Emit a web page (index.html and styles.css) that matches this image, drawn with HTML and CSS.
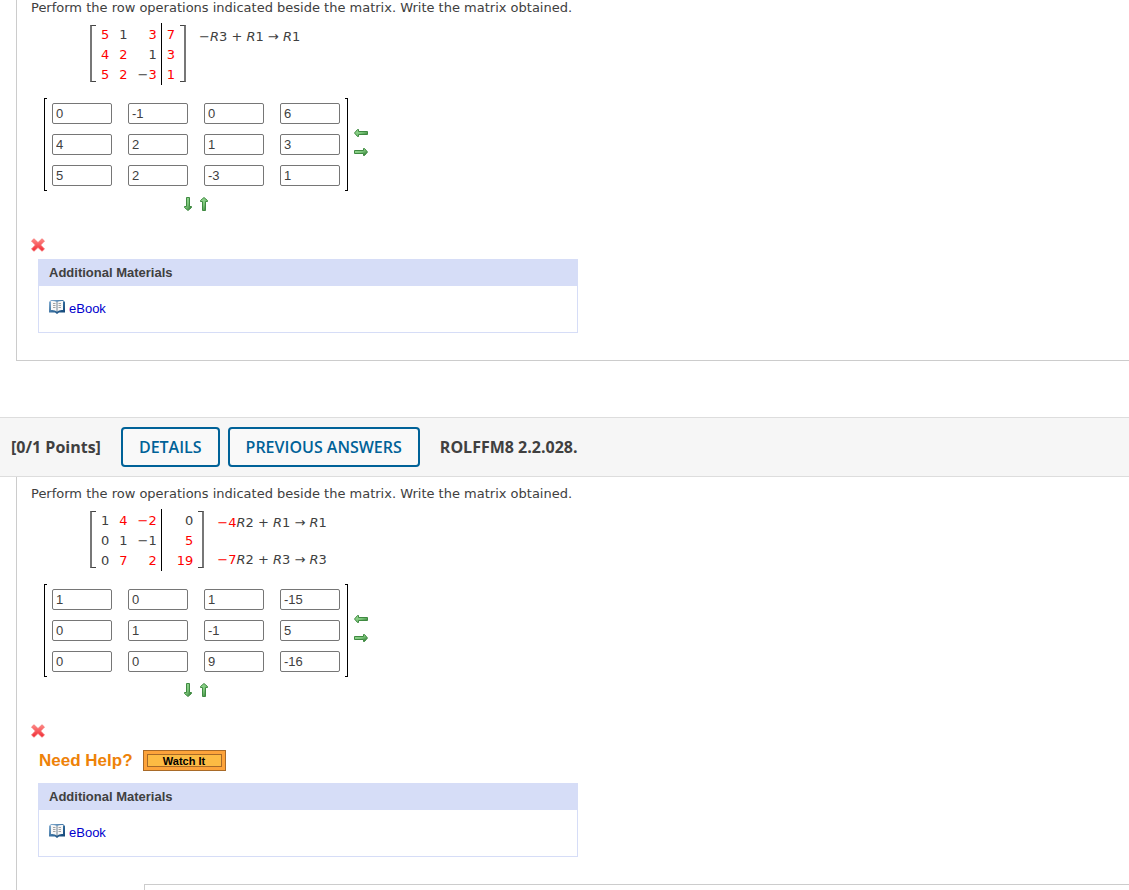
FILE: index.html
```html
<!DOCTYPE html>
<html lang="en">
<head>
  <meta charset="UTF-8">
  <meta name="viewport" content="width=device-width, initial-scale=1.0">
  <title>Matrix Row Operations</title>
  <link rel="stylesheet" href="styles.css">
</head>
<body>

  <!-- Shared icons -->
  <svg class="sprite" aria-hidden="true">
    <defs>
      <linearGradient id="green" x1="0" y1="0" x2="1" y2="1">
        <stop offset="0" stop-color="#9fdc9b"/>
        <stop offset="0.5" stop-color="#7cc67a"/>
        <stop offset="1" stop-color="#1f6b25"/>
      </linearGradient>
      <linearGradient id="red" x1="0" y1="0" x2="0" y2="1">
        <stop offset="0" stop-color="#ff8a86"/>
        <stop offset="1" stop-color="#f02a34"/>
      </linearGradient>
      <linearGradient id="cover" x1="0" y1="0" x2="1" y2="1">
        <stop offset="0" stop-color="#8db4d6"/>
        <stop offset="0.6" stop-color="#2b6496"/>
        <stop offset="1" stop-color="#0d3f70"/>
      </linearGradient>
    </defs>
    <symbol id="arrow-right" viewBox="0 0 14 8">
      <path d="M.5 2.500H9.500V.5H10.500L13.500 4 10.500 7.500H9.500V5.500H.5Z" fill="url(#green)" stroke="#3f8a41"/>
    </symbol>
    <symbol id="arrow-left" viewBox="0 0 14 8">
      <path d="M13.500 2.500H4.500V.5H3.500L.5 4 3.500 7.500H4.500V5.500H13.500Z" fill="url(#green)" stroke="#3f8a41"/>
    </symbol>
    <symbol id="arrow-down" viewBox="0 0 8 14">
      <path d="M2.500 .5V9.500H.5V10.500L4 13.500 7.500 10.500V9.500H5.500V.5Z" fill="url(#green)" stroke="#3f8a41"/>
    </symbol>
    <symbol id="arrow-up" viewBox="0 0 8 14">
      <path d="M2.500 13.500V4.500H.5V3.500L4 .5 7.500 3.500V4.500H5.500V13.500Z" fill="url(#green)" stroke="#3f8a41"/>
    </symbol>
    <symbol id="wrong" viewBox="0 0 14 14">
      <path d="M3 .7 7 4.500 11 .7 13.500 3 9.700 7 13.500 11 11 13.300 7 9.500 3 13.300 .5 11 4.300 7 .5 3Z" fill="url(#red)" stroke="#f36b6b" stroke-width=".7"/>
    </symbol>
    <symbol id="book" viewBox="0 0 16 14">
      <path d="M0 1.500H1.500V0H14.500V1.500H16V12.500H10L8 14 6 12.500H0Z" fill="url(#cover)"/>
      <path d="M2 1Q5.500 .5 8 2 10.500 .5 14 1V10Q10.500 9.500 8 11.500 5.500 9.500 2 10Z" fill="#f7f7f7"/>
      <path d="M8 2V12" stroke="#6f8294"/>
      <path d="M4 3.500H6.500M4 5.500H6.500M4 7.500H6.500M9.500 3.500H12M9.500 5.500H12M9.500 7.500H12" stroke="#a3a3a3"/>
    </symbol>
  </svg>

  <section class="question first">
    <p class="prompt">Perform the row operations indicated beside the matrix. Write the matrix obtained.</p>

    <div class="problem">
      <span class="bracket open"></span>
      <table class="matrix">
        <tr><td class="rand">5</td><td>1</td><td class="rand">3</td><td class="rand">7</td></tr>
        <tr><td class="rand">4</td><td class="rand">2</td><td>1</td><td class="rand">3</td></tr>
        <tr><td class="rand">5</td><td class="rand">2</td><td>−<span class="rand">3</span></td><td class="rand">1</td></tr>
      </table>
      <span class="bracket close"></span>
      <div class="operations">
        <p>−<i>R</i>3 + <i>R</i>1 → <i>R</i>1</p>
      </div>
    </div>

    <form class="answer">
      <div class="answer-matrix">
        <span class="bracket open"></span>
        <div class="entries">
          <input type="text" aria-label="Row 1 column 1" value="0">
          <input type="text" aria-label="Row 1 column 2" value="-1">
          <input type="text" aria-label="Row 1 column 3" value="0">
          <input type="text" aria-label="Row 1 column 4" value="6">
          <input type="text" aria-label="Row 2 column 1" value="4">
          <input type="text" aria-label="Row 2 column 2" value="2">
          <input type="text" aria-label="Row 2 column 3" value="1">
          <input type="text" aria-label="Row 2 column 4" value="3">
          <input type="text" aria-label="Row 3 column 1" value="5">
          <input type="text" aria-label="Row 3 column 2" value="2">
          <input type="text" aria-label="Row 3 column 3" value="-3">
          <input type="text" aria-label="Row 3 column 4" value="1">
        </div>
        <span class="bracket close"></span>
      </div>
      <div class="resize columns">
        <button type="button" aria-label="Remove column"><svg width="14" height="8"><use href="#arrow-left"/></svg></button>
        <button type="button" aria-label="Add column"><svg width="14" height="8"><use href="#arrow-right"/></svg></button>
      </div>
      <div class="resize rows">
        <button type="button" aria-label="Add row"><svg width="8" height="14"><use href="#arrow-down"/></svg></button>
        <button type="button" aria-label="Remove row"><svg width="8" height="14"><use href="#arrow-up"/></svg></button>
      </div>
    </form>

    <svg class="mark" width="14" height="14" role="img" aria-label="Incorrect"><use href="#wrong"/></svg>

    <div class="materials">
      <h3>Additional Materials</h3>
      <a href="#"><svg width="16" height="14" aria-hidden="true"><use href="#book"/></svg>eBook</a>
    </div>
  </section>

  <header class="question-header">
    <strong class="points">[0/1 Points]</strong>
    <button type="button">DETAILS</button>
    <button type="button">PREVIOUS ANSWERS</button>
    <strong class="source">ROLFFM8 2.2.028.</strong>
  </header>

  <section class="question last">
    <p class="prompt">Perform the row operations indicated beside the matrix. Write the matrix obtained.</p>

    <div class="problem">
      <span class="bracket open"></span>
      <table class="matrix wide">
        <tr><td>1</td><td class="rand">4</td><td class="rand">−2</td><td>0</td></tr>
        <tr><td>0</td><td>1</td><td>−1</td><td class="rand">5</td></tr>
        <tr><td>0</td><td class="rand">7</td><td class="rand">2</td><td class="rand">19</td></tr>
      </table>
      <span class="bracket close"></span>
      <div class="operations">
        <p><span class="rand">−4</span><i>R</i>2 + <i>R</i>1 → <i>R</i>1</p>
        <p><span class="rand">−7</span><i>R</i>2 + <i>R</i>3 → <i>R</i>3</p>
      </div>
    </div>

    <form class="answer">
      <div class="answer-matrix">
        <span class="bracket open"></span>
        <div class="entries">
          <input type="text" aria-label="Row 1 column 1" value="1">
          <input type="text" aria-label="Row 1 column 2" value="0">
          <input type="text" aria-label="Row 1 column 3" value="1">
          <input type="text" aria-label="Row 1 column 4" value="-15">
          <input type="text" aria-label="Row 2 column 1" value="0">
          <input type="text" aria-label="Row 2 column 2" value="1">
          <input type="text" aria-label="Row 2 column 3" value="-1">
          <input type="text" aria-label="Row 2 column 4" value="5">
          <input type="text" aria-label="Row 3 column 1" value="0">
          <input type="text" aria-label="Row 3 column 2" value="0">
          <input type="text" aria-label="Row 3 column 3" value="9">
          <input type="text" aria-label="Row 3 column 4" value="-16">
        </div>
        <span class="bracket close"></span>
      </div>
      <div class="resize columns">
        <button type="button" aria-label="Remove column"><svg width="14" height="8"><use href="#arrow-left"/></svg></button>
        <button type="button" aria-label="Add column"><svg width="14" height="8"><use href="#arrow-right"/></svg></button>
      </div>
      <div class="resize rows">
        <button type="button" aria-label="Add row"><svg width="8" height="14"><use href="#arrow-down"/></svg></button>
        <button type="button" aria-label="Remove row"><svg width="8" height="14"><use href="#arrow-up"/></svg></button>
      </div>
    </form>

    <svg class="mark" width="14" height="14" role="img" aria-label="Incorrect"><use href="#wrong"/></svg>

    <div class="help">
      <span>Need Help?</span>
      <button type="button">Watch It</button>
    </div>

    <div class="materials">
      <h3>Additional Materials</h3>
      <a href="#"><svg width="16" height="14" aria-hidden="true"><use href="#book"/></svg>eBook</a>
    </div>

    <div class="submission"></div>
  </section>

</body>
</html>
```

FILE: styles.css
```css
* {
  margin: 0;
  padding: 0;
  box-sizing: border-box;
}

body {
  display: flex;
  flex-direction: column;
  min-height: 100vh;
  background-color: #fff;
  color: #404040;
  font-family: "DejaVu Sans", Verdana, sans-serif;
  font-size: 13px;
}

svg {
  display: block;
}

.sprite {
  position: absolute;
  width: 0;
  height: 0;
}

/* Question body */
.question {
  margin-left: 16px;
  padding: 9px 0 0 14px;
  border-left: 1px solid #ccc;
}

.question.first {
  margin-bottom: 56px;
  padding-top: 0;
  padding-bottom: 27px;
  border-bottom: 1px solid #ccc;
}

.question.last {
  display: flex;
  flex: 1;
  flex-direction: column;
}

.prompt {
  line-height: 16px;
}

.rand {
  color: #f00;
}

/* Given matrix */
.problem {
  display: flex;
  align-items: flex-start;
  margin: 7px 0 13px 59px;
}

.bracket {
  border: 1px solid #000;
}

.bracket.open {
  border-right: none;
}

.bracket.close {
  border-left: none;
}

.problem .bracket {
  width: 6px;
  height: 57px;
  margin-top: 2px;
  border-color: #444;
}

.problem .bracket.open {
  border-left-width: 2px;
  border-left-color: #777;
}

.problem .bracket.close {
  border-right-width: 2px;
  border-right-color: #777;
}

.matrix {
  border-collapse: separate;
  border-spacing: 0;
}

.matrix td {
  padding-left: 10px;
  line-height: 20px;
  text-align: right;
}

.matrix tr:first-child td {
  padding-top: 2px;
}

.matrix td:first-child {
  padding-left: 5px;
}

.matrix td:nth-child(3) {
  padding-right: 4px;
  border-right: 1px solid #000;
}

.matrix td:last-child {
  padding: 0 5px;
}

.matrix tr:first-child td:last-child {
  padding-top: 2px;
}

.matrix.wide td:last-child {
  padding-left: 15px;
}

.operations {
  display: flex;
  flex-direction: column;
  gap: 19px;
  margin-left: 13px;
  padding-top: 5px;
  line-height: 18px;
}

/* Answer matrix */
.answer {
  display: grid;
  grid-template-columns: auto 1fr;
  column-gap: 6px;
  row-gap: 6px;
  margin-left: 13px;
}

.answer-matrix {
  display: flex;
}

.answer-matrix .bracket {
  width: 3px;
}

.entries {
  display: grid;
  grid-template-columns: repeat(4, 60px);
  gap: 10px 16px;
  padding: 5px;
}

.entries input {
  width: 100%;
  height: 21px;
  padding: 0 3px;
  border: 1px solid #767676;
  border-radius: 2px;
  color: #404040;
  font-family: "Liberation Sans", Arial, sans-serif;
  font-size: 13px;
}

.resize {
  display: flex;
  justify-content: center;
}

.resize button {
  border: none;
  background: none;
  cursor: pointer;
}

.resize.columns {
  flex-direction: column;
  align-items: flex-start;
  gap: 11px;
  padding-bottom: 4px;
}

.resize.rows {
  gap: 8px;
}

.mark {
  margin: 27px 0 7px;
}

/* Help */
.help {
  display: flex;
  align-items: center;
  gap: 10px;
  margin: 5px 0 12px 8px;
  color: #ee8208;
  font-family: "Liberation Sans", Arial, sans-serif;
  font-size: 17px;
  font-weight: bold;
  line-height: 21px;
}

.help button {
  width: 83px;
  height: 21px;
  border: 1px solid #a86a28;
  background-color: #fdbb43;
  box-shadow: inset 0 0 0 3px #fda33a, inset 0 0 0 4px #a86a28;
  color: #000;
  font-family: "Liberation Sans", Arial, sans-serif;
  font-size: 11px;
  font-weight: bold;
  cursor: pointer;
}

/* Additional materials */
.materials {
  width: 540px;
  max-width: 100%;
  margin-left: 7px;
  border: 1px solid #d6ddf7;
  font-family: "Liberation Sans", Arial, sans-serif;
}

.materials h3 {
  padding: 0 10px;
  background-color: #d6ddf7;
  font-size: 13px;
  line-height: 26px;
}

.materials a {
  display: inline-flex;
  align-items: flex-start;
  gap: 4px;
  margin: 14px 10px;
  color: #0000cd;
  line-height: 18px;
  text-decoration: none;
}

/* Question header */
.question-header {
  display: flex;
  align-items: center;
  gap: 8px;
  padding: 9px 11px;
  border: solid #ddd;
  border-width: 1px 0;
  background-color: #f6f6f6;
  font-family: "Open Sans", sans-serif;
  font-size: 16px;
}

.question-header button {
  height: 40px;
  padding: 0 16px;
  border: 2px solid #006298;
  border-radius: 4px;
  background-color: #f9f9f9;
  color: #006298;
  font-family: "Open Sans", sans-serif;
  font-size: 16px;
  font-weight: 600;
  cursor: pointer;
}

.points {
  margin-right: 12px;
}

.source {
  margin-left: 12px;
}

/* Submission panel */
.submission {
  flex: 1;
  margin: 27px 0 0 113px;
  border: solid #ccc;
  border-width: 1px 0 0 1px;
}
```
